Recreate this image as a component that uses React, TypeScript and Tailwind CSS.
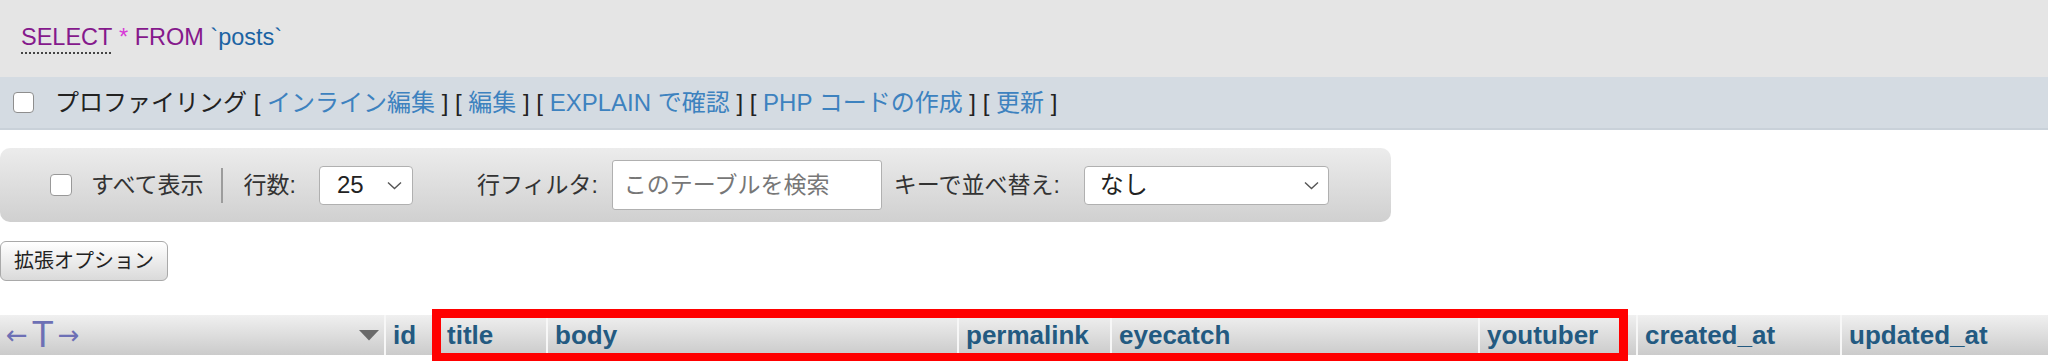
import React from 'react';

const columns = [
  { name: 'id', width: 'w-[54px]' },
  { name: 'title', width: 'w-[108px]' },
  { name: 'body', width: 'w-[411px]' },
  { name: 'permalink', width: 'w-[153px]' },
  { name: 'eyecatch', width: 'w-[368px]' },
  { name: 'youtuber', width: 'w-[158px]' },
  { name: 'created_at', width: 'w-[204px]' },
  { name: 'updated_at', width: 'w-[208px]' },
];

function Checkbox({ className }: { className: string }) {
  return <span className={`block shrink-0 rounded-[4px] border border-[#8e8e8e] bg-white ${className}`} />;
}

function Chevron() {
  return (
    <svg width="15" height="9" viewBox="0 0 15 9" fill="none" stroke="#555" strokeWidth="1.4">
      <path d="M1 1.5l6.5 6 6.5-6" />
    </svg>
  );
}

export default function App() {
  return (
    <div className="relative h-[361px] w-[2048px] overflow-hidden bg-white font-['Liberation_Sans','Noto_Sans_CJK_JP',sans-serif]">
      {/* query */}
      <div className="flex h-[77px] items-start bg-[#e5e5e5] pl-[21px] pt-[23px] text-[23.5px] leading-[28px]">
        <span className="text-[#85198c] underline decoration-dotted decoration-[#444] decoration-[1.5px] underline-offset-[7px]">
          SELECT
        </span>
        <span className="whitespace-pre text-[#d83ad8]"> * </span>
        <span className="text-[#85198c]">FROM</span>
        <span className="whitespace-pre text-[#1b63a3]"> `posts`</span>
      </div>

      {/* links */}
      <div className="flex h-[53px] items-center border-b-2 border-[#c9d1d9] bg-[#d4dbe2] pl-[13px] text-[24px] text-[#222]">
        <Checkbox className="h-[21px] w-[21px]" />
        <span className="ml-[21px] whitespace-pre">
          プロファイリング [ <a className="text-[#3d82bf]">インライン編集</a> ] [ <a className="text-[#3d82bf]">編集</a> ] [{' '}
          <a className="text-[#3d82bf]">EXPLAIN で確認</a> ] [ <a className="text-[#3d82bf]">PHP コードの作成</a> ] [{' '}
          <a className="text-[#3d82bf]">更新</a> ]
        </span>
      </div>

      {/* navigation toolbar */}
      <div className="mt-[18px] flex h-[74px] w-[1391px] items-center rounded-[10px] bg-linear-to-b from-[#ececec] to-[#d0d0d0] text-[23px] text-[#333]">
        <Checkbox className="ml-[50px] h-[22px] w-[22px] border-[#999]" />
        <span className="ml-[19px]">すべて表示</span>
        <span className="ml-[18px] h-[35px] w-[2px] bg-[#9c9c9c]" />
        <span className="ml-[20px]">行数:</span>
        <div className="ml-[23px] flex h-[39px] w-[94px] items-center justify-between rounded-[4px] border border-[#b0b0b0] bg-white pl-[17px] pr-[10px] text-[24px] text-[#222]">
          <span>25</span>
          <Chevron />
        </div>
        <span className="ml-[64px]">行フィルタ:</span>
        <div className="ml-[14px] flex h-[50px] w-[270px] items-center rounded-[3px] border border-[#b0b0b0] bg-white pl-[11px] text-[#777]">
          このテーブルを検索
        </div>
        <span className="ml-[12px]">キーで並べ替え:</span>
        <div className="ml-[24px] flex h-[39px] w-[245px] items-center justify-between rounded-[4px] border border-[#b0b0b0] bg-white pl-[15px] pr-[9px] text-[24px] text-[#222]">
          <span>なし</span>
          <Chevron />
        </div>
      </div>

      {/* options button */}
      <div className="mt-[19px] flex h-[40px] w-[168px] items-center rounded-[6px] border border-[#a9a9a9] bg-linear-to-b from-white to-[#dadada] pl-[13px] text-[20px] text-[#222]">
        拡張オプション
      </div>

      {/* table header */}
      <div className="mt-[34px] flex h-[40px] bg-linear-to-b from-[#f0f0f0] to-[#cbcbcb]">
        <div className="flex w-[384px] items-center justify-between pl-[6px] pr-[5px] text-[#6d70b5]">
          <span className="flex items-center">
            <span className="font-['DejaVu_Sans'] text-[26px] leading-none">←</span>
            <span className="mx-[4px] text-[36px] leading-none">T</span>
            <span className="font-['DejaVu_Sans'] text-[26px] leading-none">→</span>
          </span>
          <svg width="20" height="11" viewBox="0 0 20 11">
            <polygon points="0,0 20,0 10,10.5" fill="#6a6a6a" />
          </svg>
        </div>
        {columns.map((c) => (
          <div
            key={c.name}
            className={`flex items-center border-l-2 border-[#f7f7f7] pl-[7px] text-[26px] font-bold text-[#235a81] ${c.width}`}
          >
            {c.name}
          </div>
        ))}
      </div>

      {/* highlight */}
      <div className="absolute left-[432px] top-[309px] h-[53px] w-[1196px] border-[9px] border-[#ff0000]" />
    </div>
  );
}
